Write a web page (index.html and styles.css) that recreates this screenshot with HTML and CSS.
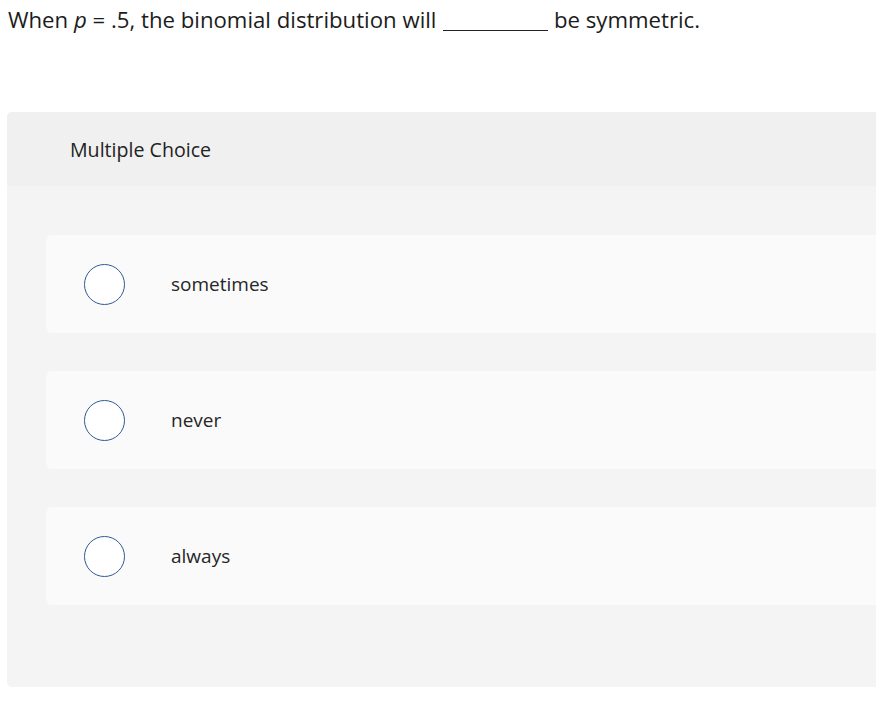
FILE: index.html
```html
<!DOCTYPE html>
<html>
<head>
<meta charset="utf-8">
<link rel="stylesheet" href="styles.css">
</head>
<body>
<p class="question">When <i class="var">p</i> = .5, the binomial distribution will <span class="blank"></span> be symmetric.</p>
<div class="panel">
  <div class="panel-head">Multiple Choice</div>
  <div class="panel-body">
    <div class="option"><span class="radio"></span><span class="label">sometimes</span></div>
    <div class="option"><span class="radio"></span><span class="label">never</span></div>
    <div class="option"><span class="radio"></span><span class="label">always</span></div>
  </div>
</div>
</body>
</html>
```
FILE: styles.css
```css
html, body {
  margin: 0;
  padding: 0;
  background: #ffffff;
  overflow: hidden;
}
body {
  font-family: "Open Sans", "Liberation Sans", sans-serif;
  color: #1e1e1e;
}
.question {
  margin: 0;
  padding: 6px 0 0 8px;
  font-size: 22.2px;
  line-height: 28px;
  color: #1c1c1c;
}
.var {
  font-style: italic;
}
.blank {
  display: inline-block;
  width: 105px;
  border-bottom: 1.5px solid #222;
  margin: 0 0 0 1px;
  vertical-align: -3px;
}
.panel {
  margin: 78px 0 0 7px;
  background: #f4f4f4;
  border-radius: 5px 0 0 5px;
  height: 575px;
  display: flex;
  flex-direction: column;
}
.panel-head {
  height: 74px;
  background: #f0f0f0;
  border-radius: 5px 0 0 0;
  display: flex;
  align-items: center;
  padding-left: 63px;
  font-size: 19.6px;
  color: #222;
}
.panel-body {
  padding: 49px 0 0 39px;
  display: flex;
  flex-direction: column;
  gap: 38px;
}
.option {
  height: 98px;
  background: #fafafa;
  border-radius: 5px 0 0 5px;
  display: flex;
  align-items: center;
  padding-left: 38px;
}
.radio {
  width: 39px;
  height: 39px;
  border: 1.4px solid #2d5a94;
  border-radius: 50%;
  background: #ffffff;
  flex: none;
}
.label {
  margin-left: 46px;
  font-size: 19px;
  color: #262626;
}
```
